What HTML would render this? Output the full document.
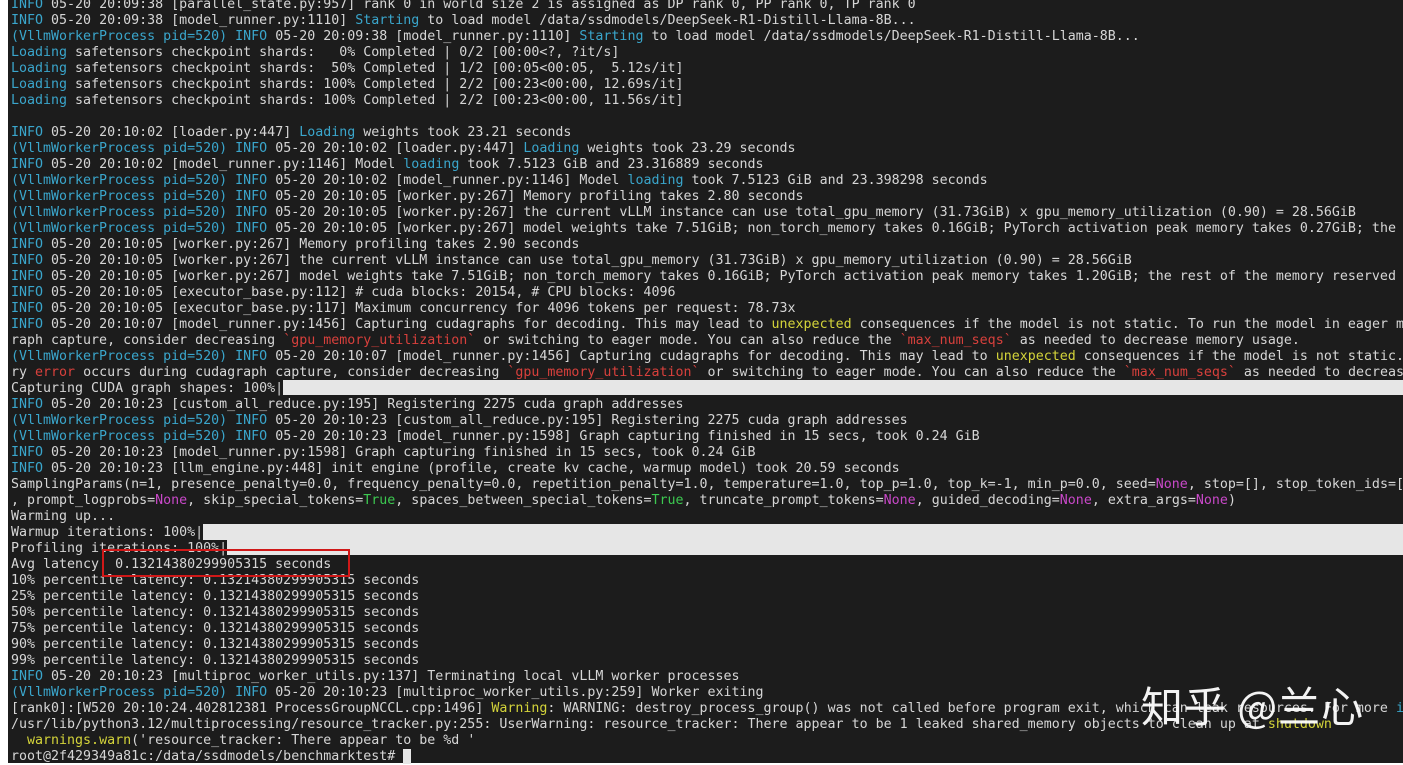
<!DOCTYPE html>
<html><head><meta charset="utf-8"><style>
html,body{margin:0;padding:0;width:1403px;height:763px;overflow:hidden;background:#fff}
#t{position:absolute;left:8px;top:0;width:1395px;height:763px;background:#1c1c1c;overflow:hidden}
pre{position:absolute;left:3px;top:-3px;margin:0;font-family:"DejaVu Sans Mono","Liberation Mono",monospace;font-size:13.3px;line-height:16px;color:#d6d6d6;white-space:pre}
.c{color:#3aa6cc}.y{color:#d4d43a}.r{color:#d8403c}.m{color:#c848c8}.g{color:#3cc850}
.bar{position:absolute;background:#e6e6e6}
#box{position:absolute;left:102px;top:549px;width:244px;height:24px;border:2px solid #d01818}
#wm{position:absolute;left:1141px;top:674px;font-family:"Noto Sans CJK SC","WenQuanYi Zen Hei",sans-serif;font-size:42px;color:#fff;letter-spacing:1px;opacity:.95}
</style></head><body>
<div id="t"></div>
<div class="bar" style="left:283px;top:380px;width:1120px;height:15px"></div>
<div class="bar" style="left:203px;top:524px;width:1200px;height:16px"></div>
<div class="bar" style="left:227px;top:540px;width:1176px;height:15px"></div>
<pre style="left:11px"><span class="c">INFO</span> 05-20 20:09:38 [parallel_state.py:957] rank 0 in world size 2 is assigned as DP rank 0, PP rank 0, TP rank 0
<span class="c">INFO</span> 05-20 20:09:38 [model_runner.py:1110] <span class="c">Starting</span> to load model /data/ssdmodels/DeepSeek-R1-Distill-Llama-8B...
<span class="c">(VllmWorkerProcess pid=520) INFO</span> 05-20 20:09:38 [model_runner.py:1110] <span class="c">Starting</span> to load model /data/ssdmodels/DeepSeek-R1-Distill-Llama-8B...
<span class="c">Loading</span> safetensors checkpoint shards:   0% Completed | 0/2 [00:00&lt;?, ?it/s]
<span class="c">Loading</span> safetensors checkpoint shards:  50% Completed | 1/2 [00:05&lt;00:05,  5.12s/it]
<span class="c">Loading</span> safetensors checkpoint shards: 100% Completed | 2/2 [00:23&lt;00:00, 12.69s/it]
<span class="c">Loading</span> safetensors checkpoint shards: 100% Completed | 2/2 [00:23&lt;00:00, 11.56s/it]

<span class="c">INFO</span> 05-20 20:10:02 [loader.py:447] <span class="c">Loading</span> weights took 23.21 seconds
<span class="c">(VllmWorkerProcess pid=520) INFO</span> 05-20 20:10:02 [loader.py:447] <span class="c">Loading</span> weights took 23.29 seconds
<span class="c">INFO</span> 05-20 20:10:02 [model_runner.py:1146] Model <span class="c">loading</span> took 7.5123 GiB and 23.316889 seconds
<span class="c">(VllmWorkerProcess pid=520) INFO</span> 05-20 20:10:02 [model_runner.py:1146] Model <span class="c">loading</span> took 7.5123 GiB and 23.398298 seconds
<span class="c">(VllmWorkerProcess pid=520) INFO</span> 05-20 20:10:05 [worker.py:267] Memory profiling takes 2.80 seconds
<span class="c">(VllmWorkerProcess pid=520) INFO</span> 05-20 20:10:05 [worker.py:267] the current vLLM instance can use total_gpu_memory (31.73GiB) x gpu_memory_utilization (0.90) = 28.56GiB
<span class="c">(VllmWorkerProcess pid=520) INFO</span> 05-20 20:10:05 [worker.py:267] model weights take 7.51GiB; non_torch_memory takes 0.16GiB; PyTorch activation peak memory takes 0.27GiB; the
<span class="c">INFO</span> 05-20 20:10:05 [worker.py:267] Memory profiling takes 2.90 seconds
<span class="c">INFO</span> 05-20 20:10:05 [worker.py:267] the current vLLM instance can use total_gpu_memory (31.73GiB) x gpu_memory_utilization (0.90) = 28.56GiB
<span class="c">INFO</span> 05-20 20:10:05 [worker.py:267] model weights take 7.51GiB; non_torch_memory takes 0.16GiB; PyTorch activation peak memory takes 1.20GiB; the rest of the memory reserved
<span class="c">INFO</span> 05-20 20:10:05 [executor_base.py:112] # cuda blocks: 20154, # CPU blocks: 4096
<span class="c">INFO</span> 05-20 20:10:05 [executor_base.py:117] Maximum concurrency for 4096 tokens per request: 78.73x
<span class="c">INFO</span> 05-20 20:10:07 [model_runner.py:1456] Capturing cudagraphs for decoding. This may lead to <span class="y">unexpected</span> consequences if the model is not static. To run the model in eager m
raph capture, consider decreasing <span class="r">`gpu_memory_utilization`</span> or switching to eager mode. You can also reduce the <span class="r">`max_num_seqs`</span> as needed to decrease memory usage.
<span class="c">(VllmWorkerProcess pid=520) INFO</span> 05-20 20:10:07 [model_runner.py:1456] Capturing cudagraphs for decoding. This may lead to <span class="y">unexpected</span> consequences if the model is not static.
ry <span class="r">error</span> occurs during cudagraph capture, consider decreasing <span class="r">`gpu_memory_utilization`</span> or switching to eager mode. You can also reduce the <span class="r">`max_num_seqs`</span> as needed to decreas
Capturing CUDA graph shapes: 100%|
<span class="c">INFO</span> 05-20 20:10:23 [custom_all_reduce.py:195] Registering 2275 cuda graph addresses
<span class="c">(VllmWorkerProcess pid=520) INFO</span> 05-20 20:10:23 [custom_all_reduce.py:195] Registering 2275 cuda graph addresses
<span class="c">(VllmWorkerProcess pid=520) INFO</span> 05-20 20:10:23 [model_runner.py:1598] Graph capturing finished in 15 secs, took 0.24 GiB
<span class="c">INFO</span> 05-20 20:10:23 [model_runner.py:1598] Graph capturing finished in 15 secs, took 0.24 GiB
<span class="c">INFO</span> 05-20 20:10:23 [llm_engine.py:448] init engine (profile, create kv cache, warmup model) took 20.59 seconds
SamplingParams(n=1, presence_penalty=0.0, frequency_penalty=0.0, repetition_penalty=1.0, temperature=1.0, top_p=1.0, top_k=-1, min_p=0.0, seed=<span class="m">None</span>, stop=[], stop_token_ids=[
, prompt_logprobs=<span class="m">None</span>, skip_special_tokens=<span class="g">True</span>, spaces_between_special_tokens=<span class="g">True</span>, truncate_prompt_tokens=<span class="m">None</span>, guided_decoding=<span class="m">None</span>, extra_args=<span class="m">None</span>)
Warming up...
Warmup iterations: 100%|
Profiling iterations: 100%|
Avg latency: 0.13214380299905315 seconds
10% percentile latency: 0.13214380299905315 seconds
25% percentile latency: 0.13214380299905315 seconds
50% percentile latency: 0.13214380299905315 seconds
75% percentile latency: 0.13214380299905315 seconds
90% percentile latency: 0.13214380299905315 seconds
99% percentile latency: 0.13214380299905315 seconds
<span class="c">INFO</span> 05-20 20:10:23 [multiproc_worker_utils.py:137] Terminating local vLLM worker processes
<span class="c">(VllmWorkerProcess pid=520) INFO</span> 05-20 20:10:23 [multiproc_worker_utils.py:259] Worker exiting
[rank0]:[W520 20:10:24.402812381 ProcessGroupNCCL.cpp:1496] <span class="y">Warning</span>: WARNING: destroy_process_group() was not called before program exit, which can leak resources. For more <span class="c">i</span>
/usr/lib/python3.12/multiprocessing/resource_tracker.py:255: UserWarning: resource_tracker: There appear to be 1 leaked shared_memory objects to clean up at <span class="y">shutdown</span>
  <span class="y">warnings.warn</span>('resource_tracker: There appear to be %d '
root@2f429349a81c:/data/ssdmodels/benchmarktest# <span style="background:#e6e6e6"> </span></pre>
<div id="box"></div>
<div id="wm">知乎 @兰心</div>
</body></html>
